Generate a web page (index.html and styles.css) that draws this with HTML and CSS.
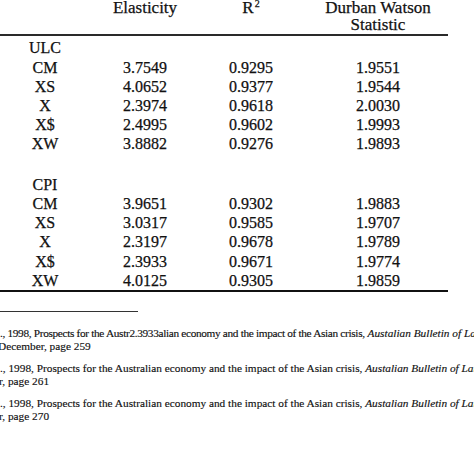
FILE: index.html
```html
<!DOCTYPE html>
<html>
<head>
<meta charset="utf-8">
<link rel="stylesheet" href="styles.css">
</head>
<body>
<div class="page">
  <div class="row head">
    <div></div>
    <div>Elasticity</div>
    <div>R<sup class="sq">2</sup></div>
    <div>Durban Watson<br>Statistic</div>
  </div>
  <div class="rule top"></div>
  <div class="group first">
    <div class="row"><div>ULC</div><div></div><div></div><div></div></div>
    <div class="row"><div>CM</div><div>3.7549</div><div>0.9295</div><div>1.9551</div></div>
    <div class="row"><div>XS</div><div>4.0652</div><div>0.9377</div><div>1.9544</div></div>
    <div class="row"><div>X</div><div>2.3974</div><div>0.9618</div><div>2.0030</div></div>
    <div class="row"><div>X$</div><div>2.4995</div><div>0.9602</div><div>1.9993</div></div>
    <div class="row"><div>XW</div><div>3.8882</div><div>0.9276</div><div>1.9893</div></div>
  </div>
  <div class="group second">
    <div class="row"><div>CPI</div><div></div><div></div><div></div></div>
    <div class="row"><div>CM</div><div>3.9651</div><div>0.9302</div><div>1.9883</div></div>
    <div class="row"><div>XS</div><div>3.0317</div><div>0.9585</div><div>1.9707</div></div>
    <div class="row"><div>X</div><div>2.3197</div><div>0.9678</div><div>1.9789</div></div>
    <div class="row"><div>X$</div><div>2.3933</div><div>0.9671</div><div>1.9774</div></div>
    <div class="row"><div>XW</div><div>4.0125</div><div>0.9305</div><div>1.9859</div></div>
  </div>
  <div class="rule bottom"></div>
  <div class="fnrule"></div>
  <div class="notes">
    <div class="note">
      <div class="line"><span class="tight">., 1998, Prospects for the Austr2.3933alian economy and the impact of the Asian crisis,</span> <i>Austalian Bulletin of Labour</i></div>
      <div class="line cont">December, page 259</div>
    </div>
    <div class="note">
      <div class="line">., 1998, Prospects for the Australian economy and the impact of the Asian crisis, <i>Austalian Bulletin of Labour</i></div>
      <div class="line cont2">r, page 261</div>
    </div>
    <div class="note">
      <div class="line">., 1998, Prospects for the Australian economy and the impact of the Asian crisis, <i>Austalian Bulletin of Labour</i></div>
      <div class="line cont2">r, page 270</div>
    </div>
  </div>
</div>
</body>
</html>
```

FILE: styles.css
```css
html, body {
  margin: 0;
  padding: 0;
  background: #ffffff;
}
body {
  width: 474px;
  height: 474px;
  overflow: hidden;
}
.page {
  font-family: "Liberation Serif", "Times New Roman", serif;
  color: #111111;
  font-size: 16px;
  display: flex;
  flex-direction: column;
  -webkit-text-stroke: 0.25px #111111;
}
.row {
  display: grid;
  grid-template-columns: 90px 110px 102px 152px;
  line-height: 19.2px;
  text-align: center;
  align-items: start;
}
.head {
  line-height: 17.5px;
  margin-top: -1.5px;
  font-size: 17px;
}
.sq {
  font-size: 10px;
  line-height: 0;
  vertical-align: 6px;
  margin-left: 1px;
}
.rule {
  width: 448px;
  background: #2a2a2a;
}
.rule.top {
  height: 2px;
  margin-top: 0.5px;
}
.rule.bottom {
  height: 2px;
  background: #111111;
}
.group.first {
  margin-top: 2.3px;
}
.group.second {
  margin-top: 21.3px;
}
.fnrule {
  width: 138px;
  height: 1px;
  background: #333333;
  margin-top: 19px;
}
.notes {
  margin-top: 14.9px;
  display: flex;
  flex-direction: column;
  gap: 9px;
  font-size: 11.3px;
  line-height: 13px;
  -webkit-text-stroke: 0.15px #111111;
}
.line {
  white-space: nowrap;
}
.tight {
  letter-spacing: -0.33px;
}
.line.cont {
  margin-left: -2px;
}
.line.cont2 {
  margin-left: -1px;
}
```
